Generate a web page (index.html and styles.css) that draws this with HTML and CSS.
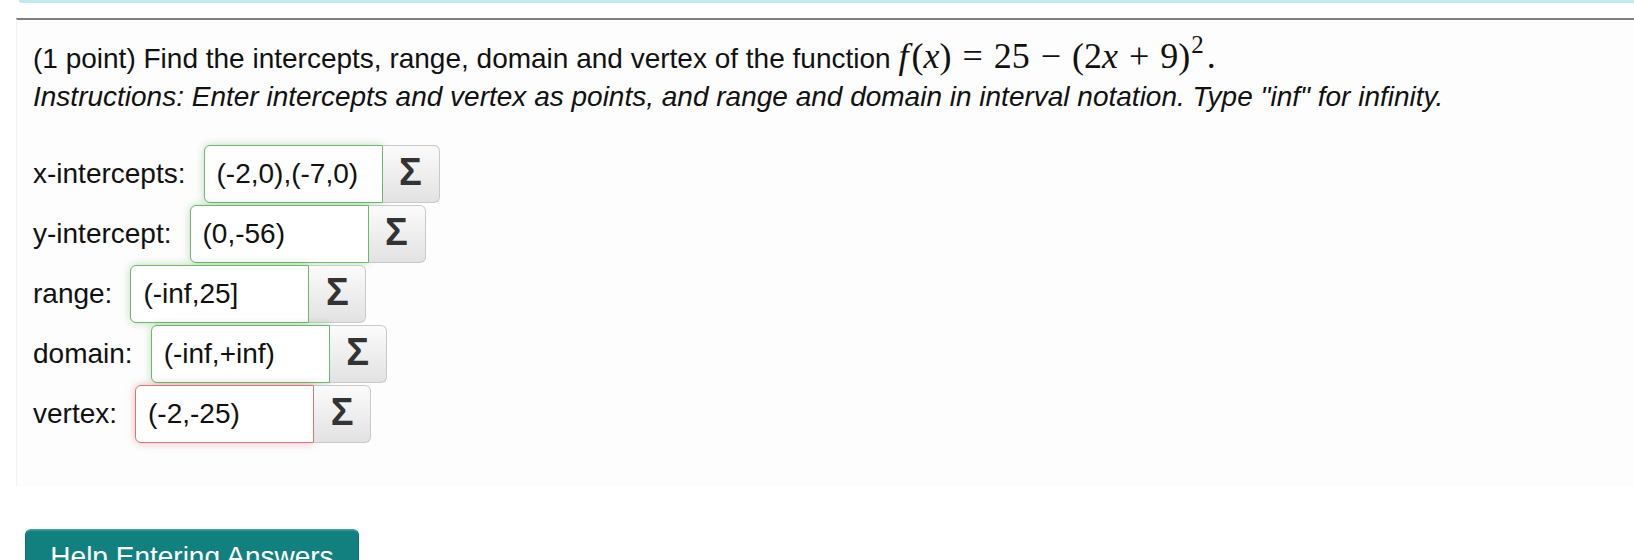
FILE: index.html
```html
<!DOCTYPE html>
<html lang="en">
<head>
<meta charset="utf-8">
<title>Problem</title>
<link rel="stylesheet" href="styles.css">
</head>
<body>
<div class="alert-edge"></div>
<div class="problem">
  <p class="statement">(1 point) Find the intercepts, range, domain and vertex of the function <span class="math"><i class="fn">f</i>(<i>x</i>)<span class="op">=</span>25<span class="op">−</span>(2<i>x</i><span class="op">+</span>9)<sup>2</sup><span class="dot">.</span></span></p>
  <p class="instructions">Instructions: Enter intercepts and vertex as points, and range and domain in interval notation. Type "inf" for infinity.</p>
  <div class="answers">
    <div class="answer-row">
      <span class="label">x-intercepts:</span>
      <div class="input-group"><div class="answer correct">(-2,0),(-7,0)</div><span class="sigma">Σ</span></div>
    </div>
    <div class="answer-row">
      <span class="label">y-intercept:</span>
      <div class="input-group"><div class="answer correct">(0,-56)</div><span class="sigma">Σ</span></div>
    </div>
    <div class="answer-row">
      <span class="label">range:</span>
      <div class="input-group"><div class="answer correct">(-inf,25]</div><span class="sigma">Σ</span></div>
    </div>
    <div class="answer-row">
      <span class="label">domain:</span>
      <div class="input-group"><div class="answer correct">(-inf,+inf)</div><span class="sigma">Σ</span></div>
    </div>
    <div class="answer-row">
      <span class="label">vertex:</span>
      <div class="input-group"><div class="answer incorrect">(-2,-25)</div><span class="sigma">Σ</span></div>
    </div>
  </div>
</div>
<div class="help-wrap"><span class="help-btn">Help Entering Answers</span></div>
</body>
</html>
```

FILE: styles.css
```css
html, body {
  margin: 0;
  padding: 0;
  background: #ffffff;
}

body {
  font-family: "Liberation Sans", Arial, sans-serif;
  font-size: 28px;
  color: #111111;
  overflow: hidden;
}

.alert-edge {
  height: 3px;
  margin-left: 19px;
  background: #c3e6ef;
  border-radius: 0 0 0 5px;
}

.problem {
  margin-top: 15px;
  margin-left: 16px;
  border-top: 2px solid #7f7f7f;
  border-left: 1px solid #f2f2f2;
  background: #fdfdfd;
  padding: 20px 0 43px 16px;
}

.statement,
.instructions {
  margin: 0;
  line-height: 38px;
}

.instructions {
  font-style: italic;
}

.math {
  font-family: "Liberation Serif", "Times New Roman", serif;
  font-size: 36px;
  line-height: 32px;
}

.math i {
  font-style: italic;
}

.math .fn {
  margin-right: 3px;
}

.math .op {
  padding: 0 11px;
}

.math sup {
  font-size: 25px;
  line-height: 0;
  vertical-align: 15px;
  margin-left: 1px;
}

.math .dot {
  margin-left: 3px;
}

.answers {
  margin-top: 29px;
  display: flex;
  flex-direction: column;
  gap: 2px;
}

.answer-row {
  display: flex;
  align-items: center;
  height: 58px;
}

.label {
  margin-right: 18px;
}

.input-group {
  display: flex;
  height: 58px;
}

.answer {
  box-sizing: border-box;
  width: 179px;
  height: 58px;
  padding-left: 12px;
  display: flex;
  align-items: center;
  background: #ffffff;
  border: 1px solid #ccc;
  border-radius: 6px 0 0 6px;
  color: #111111;
}

.answer.correct {
  border-color: #6fb46f;
  box-shadow: 0 0 9px rgba(90, 175, 90, 0.4);
}

.answer.incorrect {
  border-color: #d27878;
  box-shadow: 0 0 9px rgba(205, 80, 80, 0.4);
}

.sigma {
  box-sizing: border-box;
  width: 57px;
  height: 58px;
  display: flex;
  align-items: center;
  justify-content: center;
  font-weight: bold;
  font-size: 38px;
  color: #333333;
  background: linear-gradient(#fbfbfb, #e2e2e2);
  border: 1px solid #c9c9c9;
  border-left: none;
  border-radius: 0 6px 6px 0;
  padding-bottom: 3px;
}

.help-wrap {
  margin-top: 43px;
  padding-left: 25px;
}

.help-btn {
  display: inline-block;
  box-sizing: border-box;
  width: 334px;
  height: 60px;
  padding-top: 11px;
  text-align: center;
  color: #ffffff;
  background: #138080;
  border: 1px solid #0e6f6f;
  border-top-color: #3fa0a0;
  border-radius: 6px;
  box-shadow: inset 0 1px 0 rgba(255, 255, 255, 0.15);
}
```
